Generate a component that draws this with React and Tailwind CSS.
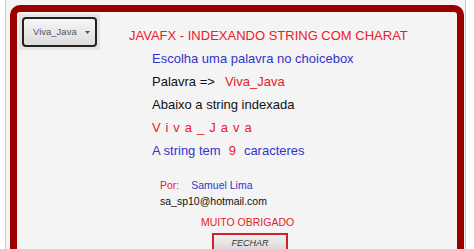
import React from "react";

export default function App() {
  return (
    <div
      className="w-[474px] h-[249px] bg-white overflow-hidden"
      style={{ fontFamily: '"Liberation Sans", Arial, sans-serif' }}
    >
      <div className="ml-[5px] w-[461px] h-[260px] border border-[#c9c9c9] bg-[#f4f4f4] pt-[5px] pl-[4px] -mt-[1px]">
        <div className="w-[454px] h-[260px] border-[7px] border-[#9a0000] rounded-[10px] bg-[#f4f4f4] flex">
          <div className="pl-[2px] pt-[2px] w-[110px] shrink-0">
            <div className="bg-[#e4e4e4] p-[3px] w-[81px]">
              <div className="h-[30px] w-[75px] rounded-[4px] border-2 border-[#222] bg-gradient-to-b from-[#f6f6f6] to-[#dcdcdc] flex items-center pl-[9px] text-[9.5px] text-[#555] whitespace-nowrap">
                <span>Viva_Java</span>
                <svg className="ml-[8px]" width="5" height="3" viewBox="0 0 5 3">
                  <path d="M0 0 L5 0 L2.5 3 Z" fill="#555" />
                </svg>
              </div>
            </div>
          </div>
          <div className="flex flex-col items-start pt-[12px] text-[13px] leading-[23px]">
            <div className="text-[#e8202a] ml-[2px]">JAVAFX - INDEXANDO STRING COM CHARAT</div>
            <div className="ml-[25px] text-[#3333cc]">Escolha uma palavra no choicebox</div>
            <div className="ml-[25px] text-[#111]">
              Palavra =&gt;<span className="ml-[10px] text-[#e8202a]">Viva_Java</span>
            </div>
            <div className="ml-[25px] text-[#111]">Abaixo a string indexada</div>
            <div className="ml-[25px] text-[#e8202a] tracking-[5px]">Viva_Java</div>
            <div className="ml-[25px] text-[#3333cc]">
              A string tem<span className="mx-[8px] text-[#e8202a]">9</span>caracteres
            </div>
            <div className="ml-[33px] mt-[15px] text-[10.5px] leading-[16px]">
              <div>
                <span className="text-[#e8202a]">Por:</span>
                <span className="ml-[12px] text-[#3333cc]">Samuel Lima</span>
              </div>
              <div className="text-[#111]">sa_sp10@hotmail.com</div>
            </div>
            <div className="ml-[74px] mt-[6px] text-[10.5px] leading-[14px] text-[#e8202a]">MUITO OBRIGADO</div>
            <div className="ml-[85px] mt-[4px] w-[76px] h-[20px] border-2 border-[#d0202a] bg-gradient-to-b from-[#f2f2f2] to-[#d6d6d6] flex items-center justify-center text-[9px] italic text-[#333]">
              FECHAR
            </div>
          </div>
        </div>
      </div>
    </div>
  );
}
